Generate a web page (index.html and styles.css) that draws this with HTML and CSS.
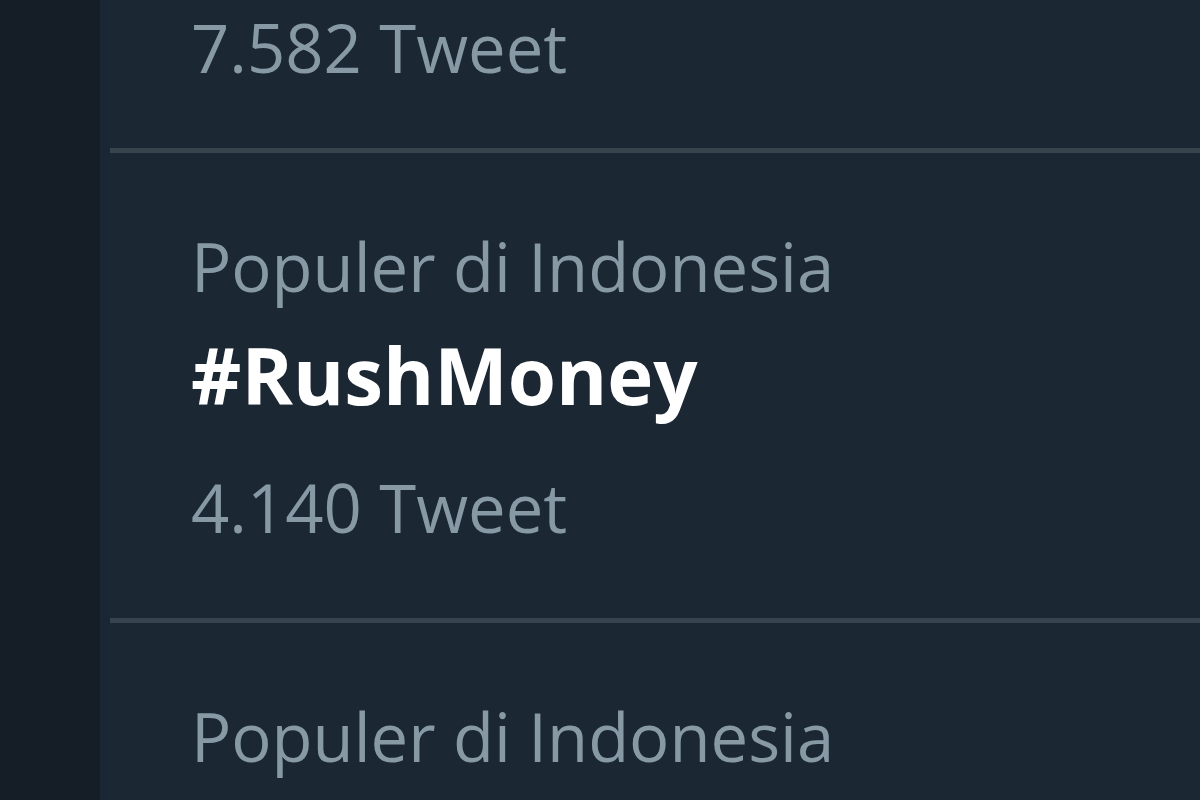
FILE: index.html
```html
<!DOCTYPE html>
<html lang="id">
<head>
<meta charset="utf-8">
<title>Trends</title>
<link rel="stylesheet" href="styles.css">
</head>
<body>
<div class="page">
  <aside class="rail"></aside>
  <main class="trends">
    <div class="trend trend-partial">
      <div class="count">7.582 Tweet</div>
    </div>
    <div class="trend">
      <div class="context">Populer di Indonesia</div>
      <div class="name">#RushMoney</div>
      <div class="count">4.140 Tweet</div>
    </div>
    <div class="trend trend-last">
      <div class="context">Populer di Indonesia</div>
    </div>
  </main>
</div>
</body>
</html>
```
FILE: styles.css
```css
html, body {
  margin: 0;
  padding: 0;
  height: 100%;
  overflow: hidden;
  background: #1b2733;
}

.page {
  display: flex;
  height: 800px;
  font-family: "Open Sans", "Noto Sans", sans-serif;
}

.rail {
  width: 100px;
  flex: none;
  background: #151e27;
}

.trends {
  flex: 1;
  background: #1b2733;
  border-left: 10px solid #1a2634;
  display: flex;
  flex-direction: column;
}

.trend {
  padding: 63px 0 61px 81px;
  border-bottom: 5px solid #38444d;
}

.trend-partial {
  padding-top: 0;
  padding-bottom: 51px;
  margin-top: -3px;
}

.trend-last {
  padding-bottom: 0;
  border-bottom: none;
}

.context,
.count {
  font-size: 67px;
  line-height: 100px;
  color: #8899a6;
  white-space: nowrap;
}

.name {
  margin-top: 4px;
  font-size: 78px;
  line-height: 110px;
  font-weight: 700;
  color: #ffffff;
  white-space: nowrap;
}

.trend .count {
  margin-top: 27px;
}

.trend-partial .count {
  margin-top: 0;
}
```
